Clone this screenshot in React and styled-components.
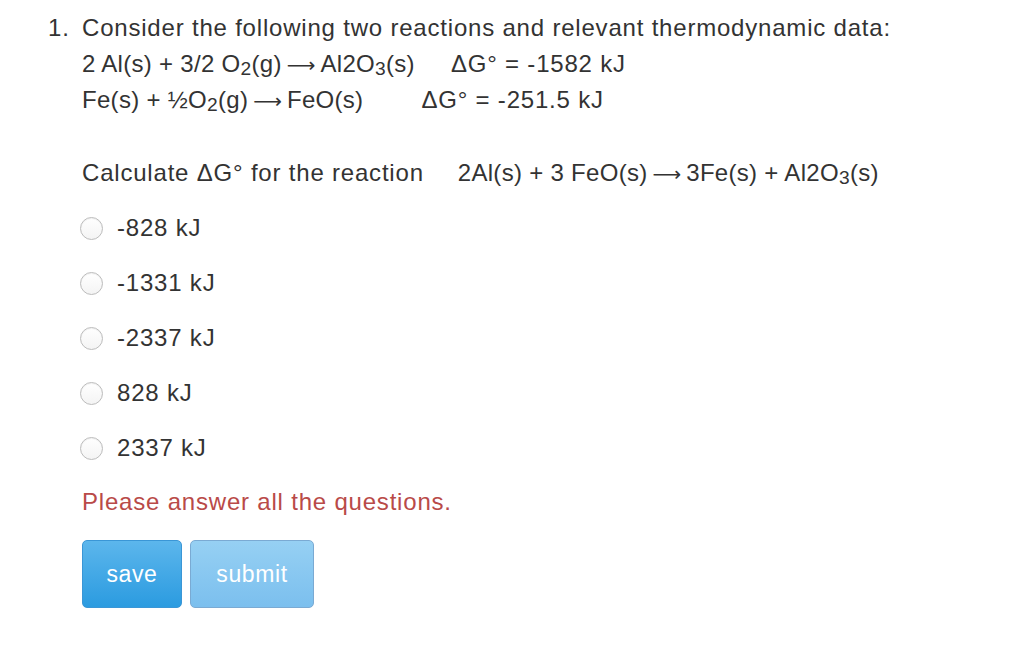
import React from 'react';
import styled, { createGlobalStyle } from 'styled-components';

const GlobalStyle = createGlobalStyle`
  body {
    margin: 0;
    background: #fff;
    font-family: "Liberation Sans", Arial, sans-serif;
    color: #333;
  }
`;

const Page = styled.div`
  padding: 10px 0 0 48px;
  font-size: 24px;
  letter-spacing: 0.8px;
`;

const Question = styled.div`
  display: flex;
`;

const Number = styled.div`
  width: 34px;
  line-height: 36px;
`;

const Body = styled.div`
  display: flex;
  flex-direction: column;
`;

const Line = styled.div`
  line-height: 36px;
  height: 36px;
  white-space: nowrap;
`;

const Formula = styled.span`
  letter-spacing: 0.3px;
`;

const Gap = styled.span`
  display: inline-block;
  width: ${p => p.w}px;
`;

const Arrow = styled.span`
  font-family: "DejaVu Sans", sans-serif;
  font-size: 20px;
  letter-spacing: 0;
  margin: 0 5px;
`;

const Prompt = styled(Line)`
  margin-top: 37px;
`;

const Options = styled.div`
  display: flex;
  flex-direction: column;
  margin-top: 19px;
  gap: 19px;
`;

const Option = styled.label`
  display: flex;
  align-items: center;
  height: 36px;
  gap: 14px;
  margin-left: -2px;
`;

const Radio = styled.span`
  width: 21px;
  height: 21px;
  border-radius: 50%;
  border: 1px solid #bcbcbc;
  background: linear-gradient(#fff, #f4f4f4);
  box-shadow: inset 0 1px 1px rgba(0, 0, 0, 0.06);
`;

const Error = styled.div`
  color: #b94a48;
  line-height: 36px;
  margin-top: 18px;
`;

const Buttons = styled.div`
  display: flex;
  gap: 8px;
  margin-top: 20px;
`;

const Button = styled.button`
  font-family: "Liberation Sans", Arial, sans-serif;
  font-size: 23px;
  letter-spacing: 0.6px;
  color: #fff;
  height: 68px;
  width: ${p => (p.disabledLook ? 124 : 100)}px;
  padding: 0;
  border-radius: 5px;
  border: 1px solid ${p => (p.disabledLook ? '#7aaad3' : '#3a96d6')};
  background: ${p =>
    p.disabledLook
      ? 'linear-gradient(#96d0f3, #7bbfee)'
      : 'linear-gradient(#5cb6ec, #2b9be0)'};
  cursor: pointer;
`;

const Sub = styled.sub`
  font-size: 0.8em;
  vertical-align: -0.18em;
  line-height: 0;
`;

const options = ['-828 kJ', '-1331 kJ', '-2337 kJ', '828 kJ', '2337 kJ'];

export default function App() {
  return (
    <>
      <GlobalStyle />
      <Page>
        <Question>
          <Number>1.</Number>
          <Body>
            <Line>Consider the following two reactions and relevant thermodynamic data:</Line>
            <Line>
              <Formula>2 Al(s) + 3/2 O<Sub>2</Sub>(g)<Arrow>⟶</Arrow>Al2O<Sub>3</Sub>(s)</Formula>
              <Gap w={36} />ΔG° = -1582 kJ
            </Line>
            <Line>
              <Formula>Fe(s) + ½O<Sub>2</Sub>(g)<Arrow>⟶</Arrow>FeO(s)</Formula>
              <Gap w={58} />ΔG° = -251.5 kJ
            </Line>
            <Prompt>
              Calculate ΔG° for the reaction<Gap w={34} />
              <Formula>2Al(s) + 3 FeO(s)<Arrow>⟶</Arrow>3Fe(s) + Al2O<Sub>3</Sub>(s)</Formula>
            </Prompt>
            <Options>
              {options.map(o => (
                <Option key={o}>
                  <Radio />
                  {o}
                </Option>
              ))}
            </Options>
            <Error>Please answer all the questions.</Error>
            <Buttons>
              <Button>save</Button>
              <Button disabledLook>submit</Button>
            </Buttons>
          </Body>
        </Question>
      </Page>
    </>
  );
}
